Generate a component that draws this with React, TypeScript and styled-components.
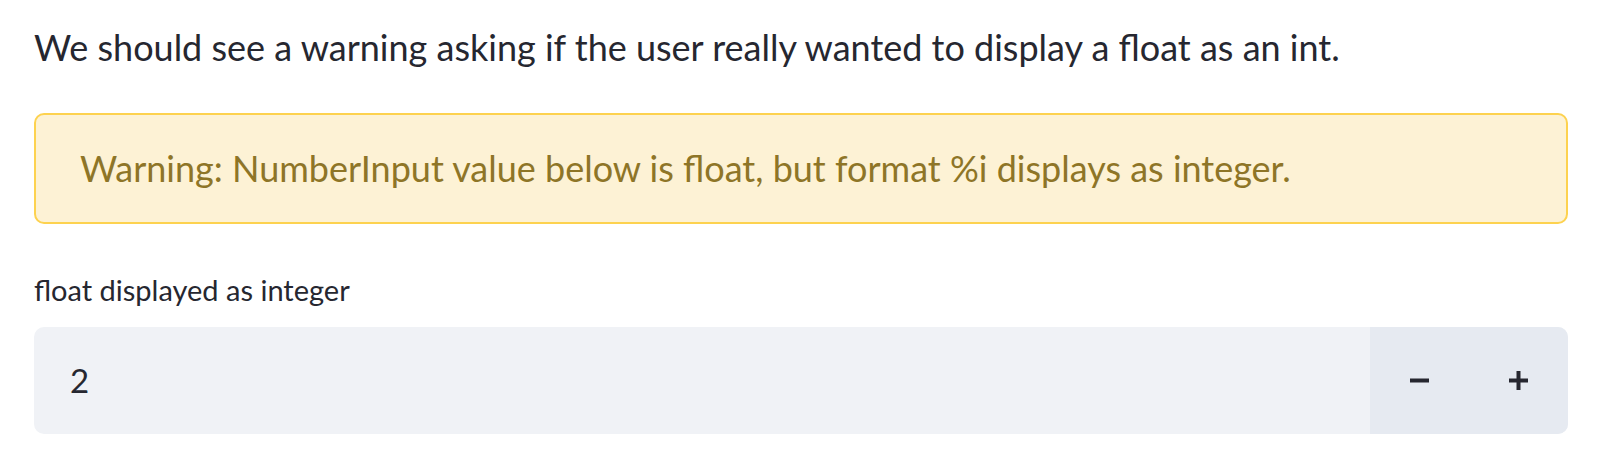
import React from "react";
import styled, { createGlobalStyle } from "styled-components";

const GlobalStyle = createGlobalStyle`
  html, body { margin: 0; padding: 0; background: #ffffff; }
  body { font-family: Lato, "Noto Sans", sans-serif; color: #262730; }
`;

const Page = styled.main`
  width: 1534px;
  padding: 26px 0 0 34px;
  display: flex;
  flex-direction: column;
`;

const Paragraph = styled.p`
  margin: 0;
  font-size: 36px;
  line-height: 1.2;
  color: #262730;
`;

const Alert = styled.div`
  margin-top: 43.8px;
  box-sizing: border-box;
  height: 111px;
  border: 2px solid #fdd24f;
  border-radius: 10px;
  background: #fdf2d5;
  display: flex;
  align-items: center;
  padding: 0 44px;
`;

const AlertText = styled.span`
  font-size: 36px;
  line-height: 1.2;
  color: #8e7527;
`;

const Label = styled.label`
  margin-top: 49.4px;
  font-size: 29px;
  line-height: 1.2;
  color: #262730;
`;

const InputRow = styled.div`
  margin-top: 18.8px;
  height: 107px;
  display: flex;
  border-radius: 10px;
  overflow: hidden;
  background: #f0f2f6;
`;

const Field = styled.div`
  flex: 1;
  display: flex;
  align-items: center;
  padding-left: 36px;
  font-size: 33px;
  color: #262730;
`;

const Steppers = styled.div`
  display: flex;
  background: #e6eaf1;
`;

const StepButton = styled.button`
  width: 99px;
  border: none;
  background: transparent;
  display: flex;
  align-items: center;
  justify-content: center;
  padding: 0;
  cursor: pointer;
`;

const Minus = () => (
  <svg width="19" height="19" viewBox="0 0 19 19">
    <rect x="0" y="7.5" width="19" height="4" fill="#262730" />
  </svg>
);

const Plus = () => (
  <svg width="19" height="19" viewBox="0 0 19 19">
    <rect x="0" y="7.5" width="19" height="4" fill="#262730" />
    <rect x="7.5" y="0" width="4" height="19" fill="#262730" />
  </svg>
);

export default function App() {
  return (
    <>
      <GlobalStyle />
      <Page>
        <Paragraph>
          We should see a warning asking if the user really wanted to display a float as an int.
        </Paragraph>
        <Alert>
          <AlertText>
            Warning: NumberInput value below is float, but format %i displays as integer.
          </AlertText>
        </Alert>
        <Label>float displayed as integer</Label>
        <InputRow>
          <Field>2</Field>
          <Steppers>
            <StepButton aria-label="decrement">
              <Minus />
            </StepButton>
            <StepButton aria-label="increment">
              <Plus />
            </StepButton>
          </Steppers>
        </InputRow>
      </Page>
    </>
  );
}
